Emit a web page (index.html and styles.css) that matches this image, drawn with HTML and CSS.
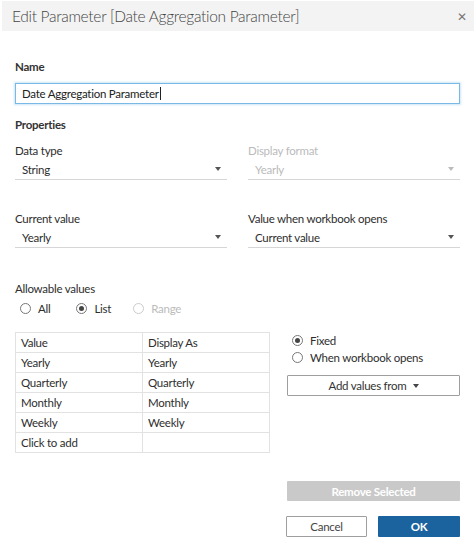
FILE: index.html
```html
<!DOCTYPE html>
<html>
<head>
<meta charset="utf-8">
<link rel="stylesheet" href="styles.css">
</head>
<body>
<div class="dialog">
  <div class="titlebar">
    <span class="title">Edit Parameter [Date Aggregation Parameter]</span>
    <span class="close">&#x2715;</span>
  </div>
  <div class="content">
    <div class="heading name-heading">Name</div>
    <div class="input">Date Aggregation Parameter<span class="caret"></span></div>
    <div class="heading props-heading">Properties</div>
    <div class="fields">
      <div class="field">
        <div class="label">Data type</div>
        <div class="select"><span>String</span><span class="arrow"></span></div>
      </div>
      <div class="field disabled">
        <div class="label">Display format</div>
        <div class="select"><span>Yearly</span><span class="arrow"></span></div>
      </div>
      <div class="field">
        <div class="label">Current value</div>
        <div class="select"><span>Yearly</span><span class="arrow"></span></div>
      </div>
      <div class="field">
        <div class="label">Value when workbook opens</div>
        <div class="select"><span>Current value</span><span class="arrow"></span></div>
      </div>
    </div>
    <div class="label allow-label">Allowable values</div>
    <div class="radio-row">
      <span class="radio"><span class="circle"></span>All</span>
      <span class="radio"><span class="circle checked"></span>List</span>
      <span class="radio disabled"><span class="circle"></span>Range</span>
    </div>
    <div class="lists">
      <div class="table">
        <div class="row"><div class="cell">Value</div><div class="cell">Display As</div></div>
        <div class="row"><div class="cell">Yearly</div><div class="cell">Yearly</div></div>
        <div class="row"><div class="cell">Quarterly</div><div class="cell">Quarterly</div></div>
        <div class="row"><div class="cell">Monthly</div><div class="cell">Monthly</div></div>
        <div class="row"><div class="cell">Weekly</div><div class="cell">Weekly</div></div>
        <div class="row"><div class="cell">Click to add</div><div class="cell"></div></div>
      </div>
      <div class="side">
        <div class="radio stacked"><span class="circle checked"></span>Fixed</div>
        <div class="radio stacked"><span class="circle"></span>When workbook opens</div>
        <div class="btn add-btn">Add values from <span class="small-arrow"></span></div>
      </div>
    </div>
    <div class="footer">
      <div class="btn remove-btn">Remove Selected</div>
      <div class="actions">
        <div class="btn cancel-btn">Cancel</div>
        <div class="btn ok-btn">OK</div>
      </div>
    </div>
  </div>
</div>
</body>
</html>
```
FILE: styles.css
```css
* { box-sizing: border-box; }
html, body { margin: 0; padding: 0; background: #fff; }
body {
  font-family: "Lato", "Liberation Sans", sans-serif;
  font-size: 11.5px;
  letter-spacing: -0.25px;
  color: #2e2e2e;
  width: 474px;
  height: 545px;
  overflow: hidden;
}
.titlebar {
  height: 30px;
  margin-top: 1px;
  margin-left: 2px;
  background: #f3f3f3;
  display: flex;
  align-items: center;
  justify-content: space-between;
  padding: 0 7px 0 10px;
}
.title {
  font-size: 15.5px;
  letter-spacing: -0.3px;
  color: #444;
  font-weight: 300;
}
.close {
  font-size: 12px;
  color: #777;
}
.content {
  padding: 0 14px 0 15px;
}
.heading {
  font-weight: 700;
  line-height: 16px;
  color: #333;
}
.name-heading { margin-top: 28px; }
.input {
  margin-top: 8px;
  height: 21px;
  border: 1px solid #7ab8e6;
  box-shadow: 0 0 2px 1px #cfe6f7;
  padding-left: 6px;
  line-height: 19px;
  color: #222;
  display: flex;
  align-items: center;
}
.caret {
  display: inline-block;
  width: 1px;
  height: 13px;
  background: #222;
  margin-left: 1px;
}
.props-heading { margin-top: 13px; }
.fields {
  margin-top: 10px;
  display: grid;
  grid-template-columns: 212px 212px;
  column-gap: 21px;
  row-gap: 31px;
}
.label { line-height: 16px; color: #2e2e2e; }
.select {
  margin-top: 1px;
  height: 20px;
  border-bottom: 1px solid #d6d6d6;
  display: flex;
  align-items: center;
  justify-content: space-between;
  padding: 0 6px 1px 7px;
  color: #2e2e2e;
}
.arrow {
  width: 0; height: 0;
  border-left: 3px solid transparent;
  border-right: 3px solid transparent;
  border-top: 4px solid #555;
}
.field.disabled .label, .field.disabled .select span { color: #bbb; }
.field.disabled .arrow { border-top-color: #bbb; }
.allow-label { margin-top: 33px; }
.radio-row {
  margin-top: 3px;
  height: 16px;
  display: flex;
  align-items: center;
  padding-left: 5px;
}
.radio {
  display: flex;
  align-items: center;
  color: #2e2e2e;
}
.radio-row .radio { margin-right: 26px; }
.radio-row .radio:nth-child(2) { margin-right: 22px; }
.radio.disabled { color: #bbb; }
.circle {
  width: 11px;
  height: 11px;
  border: 1px solid #777;
  border-radius: 50%;
  margin-right: 7px;
  display: inline-flex;
  align-items: center;
  justify-content: center;
}
.radio.disabled .circle { border-color: #ccc; }
.circle.checked::after {
  content: "";
  width: 5px;
  height: 5px;
  border-radius: 50%;
  background: #444;
}
.lists {
  margin-top: 16px;
  display: flex;
  gap: 17px;
}
.table {
  width: 255px;
  border: 1px solid #e2e2e2;
  border-bottom: none;
}
.row {
  display: grid;
  grid-template-columns: 127px 1fr;
  height: 20px;
  border-bottom: 1px solid #e2e2e2;
}
.cell {
  padding-left: 5px;
  line-height: 19px;
  color: #2e2e2e;
}
.cell:first-child { border-right: 1px solid #e2e2e2; }
.side {
  width: 173px;
  padding-top: 0;
}
.radio.stacked { height: 17px; padding-left: 5px; }
.btn {
  height: 21px;
  display: flex;
  align-items: center;
  justify-content: center;
  font-weight: 700;
  border-radius: 1px;
}
.add-btn {
  margin-top: 9px;
  border: 1px solid #9e9e9e;
  font-weight: 400;
  color: #333;
}
.small-arrow {
  display: inline-block;
  margin-left: 6px;
  width: 0; height: 0;
  border-left: 3px solid transparent;
  border-right: 3px solid transparent;
  border-top: 4px solid #444;
}
.footer {
  margin-top: 28px;
  display: flex;
  flex-direction: column;
  align-items: flex-end;
}
.remove-btn {
  width: 173px;
  height: 20px;
  background: #c9c9c9;
  color: #fff;
}
.actions {
  margin-top: 15px;
  display: flex;
  gap: 11px;
}
.cancel-btn {
  width: 81px;
  border: 1px solid #9e9e9e;
  color: #444;
  font-weight: 400;
}
.ok-btn {
  width: 82px;
  background: #1a639e;
  color: #fff;
}
```
